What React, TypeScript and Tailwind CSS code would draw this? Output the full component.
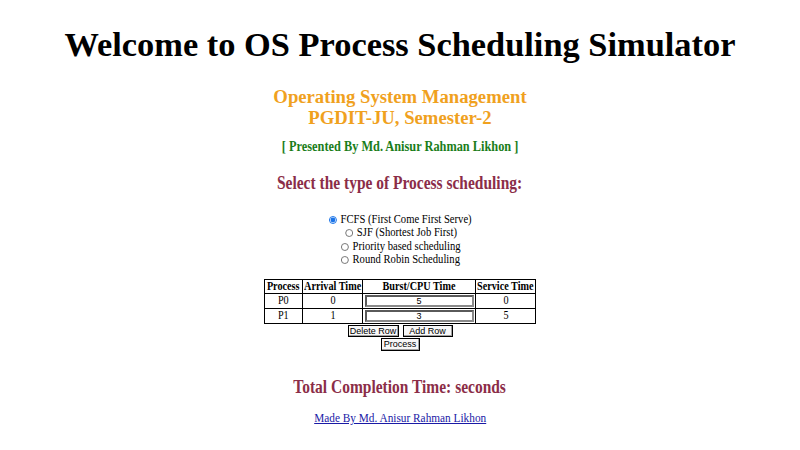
const ALGORITHMS = [
  { id: 'fcfs', label: 'FCFS (First Come First Serve)' },
  { id: 'sjf', label: 'SJF (Shortest Job First)' },
  { id: 'priority', label: 'Priority based scheduling' },
  { id: 'rr', label: 'Round Robin Scheduling' },
] as const;

const ROWS = [
  { name: 'P0', arrival: 0, burst: 5, service: 0 },
  { name: 'P1', arrival: 1, burst: 3, service: 5 },
] as const;

const serif = "font-['Liberation_Serif','Times_New_Roman',serif]";
const sans = "font-['Liberation_Sans',Arial,sans-serif]";

const narrow = 'inline-block whitespace-nowrap scale-x-[0.85]';

const HEADERS = ['Process', 'Arrival Time', 'Burst/CPU Time', 'Service Time'] as const;
const COL_WIDTHS = ['w-[38px]', 'w-[60px]', 'w-[113px]', 'w-[60px]'] as const;

const btn = `h-[12px] px-0 border border-black bg-[#f7f7f7] text-[9px] leading-[10px] whitespace-nowrap shadow-[inset_-1px_-1px_0_#a0a0a0] ${sans}`;

function Cell({ children }: { children: React.ReactNode }) {
  return (
    <div className="flex justify-center">
      <span className={narrow}>{children}</span>
    </div>
  );
}

export default function App() {
  return (
    <div className={`w-[800px] h-[450px] bg-white text-black flex flex-col items-center ${serif}`}>
      {/* Title */}
      <h1 className="mt-[24px] text-[34.4px] leading-[40px] font-bold whitespace-nowrap">
        Welcome to OS Process Scheduling Simulator
      </h1>

      {/* Course info */}
      <h3 className="mt-[22px] text-[18.7px] leading-[21px] font-bold text-[#f0a11e] text-center">
        Operating System Management
        <br />
        PGDIT-JU, Semester-2
      </h3>

      <h4 className="mt-[10px] text-[14.5px] leading-[17px] font-bold text-[#1a7d1a]">
        <span className={narrow}>[ Presented By Md. Anisur Rahman Likhon ]</span>
      </h4>

      <h3 className="mt-[18px] text-[18px] leading-[21px] font-bold text-[#8b2d48]">
        <span className={`${narrow} scale-x-[0.86]`}>Select the type of Process scheduling:</span>
      </h3>

      {/* Algorithm choice */}
      <div className="mt-[19px] flex flex-col items-center text-[12.5px] leading-[13.4px]">
        {ALGORITHMS.map((a, i) => (
          <label
            key={a.id}
            className="inline-flex items-center gap-[5px] whitespace-nowrap scale-x-[0.85] translate-x-[1px]"
          >
            <input
              type="radio"
              name="algo"
              defaultChecked={i === 0}
              className="m-0 w-[8px] h-[8px] scale-x-[1.176] accent-[#1a73e8]"
            />
            <span>{a.label}</span>
          </label>
        ))}
      </div>

      {/* Process table */}
      <table className="mt-[12px] w-[271px] border-collapse border border-black table-fixed text-[12px] leading-[13px]">
        <thead>
          <tr className="h-[14px]">
            {HEADERS.map((h, i) => (
              <th key={h} className={`${COL_WIDTHS[i]} border border-black p-0 font-bold`}>
                <Cell>{h}</Cell>
              </th>
            ))}
          </tr>
        </thead>
        <tbody>
          {ROWS.map((r) => (
            <tr key={r.name} className="h-[15px]">
              <td className="border border-black p-0">
                <Cell>{r.name}</Cell>
              </td>
              <td className="border border-black p-0">
                <Cell>{r.arrival}</Cell>
              </td>
              <td className="border border-black px-[1px] py-0 text-center">
                <input
                  readOnly
                  value={r.burst}
                  className={`block w-[109px] h-[12px] mx-auto border-2 border-t-[#5a5a5a] border-l-[#5a5a5a] border-r-[#8a8a8a] border-b-[#8a8a8a] bg-white text-center text-[9px] leading-[8px] p-0 outline-none ${sans}`}
                />
              </td>
              <td className="border border-black p-0">
                <Cell>{r.service}</Cell>
              </td>
            </tr>
          ))}
        </tbody>
      </table>

      {/* Actions */}
      <div className="mt-[1px] flex gap-[4px]">
        <button className={`w-[51px] ${btn}`}>Delete Row</button>
        <button className={`w-[50px] ${btn}`}>Add Row</button>
      </div>
      <button className={`mt-[1px] w-[39px] ${btn} h-[13px] leading-[11px]`}>Process</button>

      {/* Result */}
      <h3 className="mt-[26px] text-[18px] leading-[21px] font-bold text-[#8b2d48]">
        <span className={`${narrow} scale-x-[0.86]`}>Total Completion Time: seconds</span>
      </h3>

      <a href="#" className="mt-[12px] text-[13.3px] leading-[15px] text-[#1a1aa6] underline">
        <span className={`${narrow} underline`}>Made By Md. Anisur Rahman Likhon</span>
      </a>
    </div>
  );
}
